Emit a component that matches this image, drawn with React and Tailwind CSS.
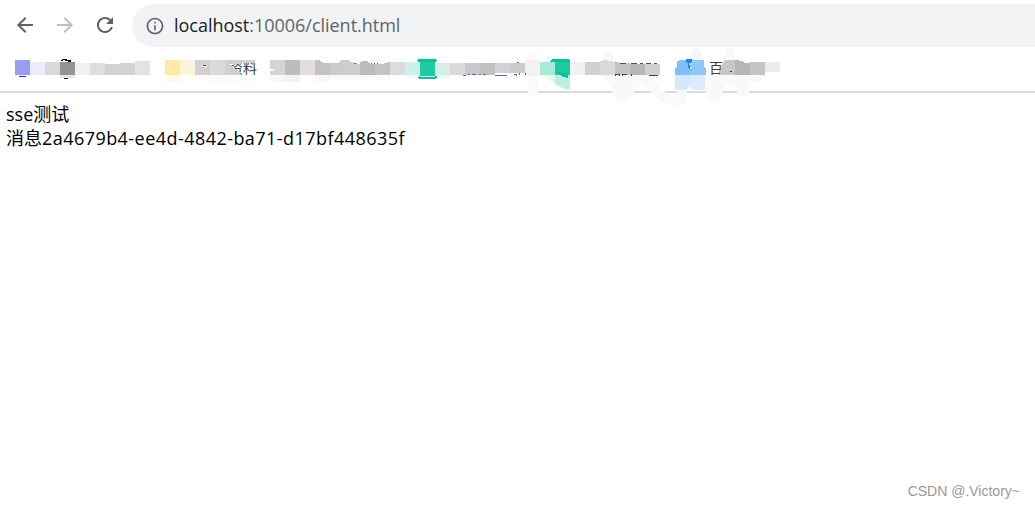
import { MdArrowBack, MdArrowForward, MdRefresh, MdInfoOutline } from 'react-icons/md';

// x, top, width, height, colour
const blocks = [
  [15, 60, 15, 15, '#9a9ef0'],
  [30, 62, 15, 13, '#eaecfb'],
  [45, 62, 15, 13, '#d9d9d9'],
  [60, 62, 15, 13, '#939393'],
  [75, 63, 15, 12, '#f0f0ee'],
  [90, 63, 15, 12, '#dedede'],
  [105, 64, 15, 11, '#d2d2d2'],
  [120, 63, 15, 12, '#d2d3d5'],
  [135, 61, 15, 14, '#e3e3e3'],
  [165, 60, 15, 15, '#fdeaa5'],
  [180, 60, 15, 15, '#fdf4dc'],
  [195, 60, 15, 15, '#d1d1d2'],
  [210, 60, 15, 15, '#dcdbda'],
  [270, 60, 15, 15, '#d2d4d6'],
  [285, 60, 15, 15, '#bbbdc0'],
  [300, 60, 15, 15, '#e2dedd'],
  [390, 62, 15, 13, '#dadce1'],
  [405, 62, 15, 13, '#caf2e8'],
  [435, 63, 15, 12, '#d5eee7'],
  [450, 63, 15, 12, '#dadad8'],
  [465, 63, 15, 12, '#c5c8cc'],
  [480, 63, 15, 12, '#c1c2bf'],
  [495, 63, 15, 10, '#d0d3d7'],
  [510, 63, 15, 10, '#cccccd'],
  [540, 62, 15, 13, '#a8e9da'],
  [570, 62, 15, 13, '#f1f1f1'],
  [585, 62, 15, 13, '#d0d0d1'],
  [645, 64, 15, 11, '#d0d0d0'],
  [765, 62, 15, 10, '#ebebee'],
];

const shades = [
  [15, 75, 15, 1, '#f3f3fd'],
  [60, 75, 15, 3, '#e5e5e5'],
  [165, 75, 15, 7, '#fffaea'],
  [180, 75, 15, 7, '#fffdf7'],
  [270, 75, 15, 7, '#f8f8f8'],
  [285, 75, 15, 7, '#f1f3f2'],
  [315, 75, 15, 7, '#f8f8f8'],
  [330, 75, 60, 5, '#fafafa'],
  [405, 75, 45, 3, '#eefaf7'],
];

function Rects({ items }) {
  return items.map(([x, y, w, h, fill]) => <rect key={x} x={x} y={y} width={w} height={h} fill={fill} />);
}

function Smudges() {
  return (
    <svg className="absolute left-0 top-0" width="800" height="59" viewBox="0 47 800 59" shapeRendering="crispEdges">
      {/* faint brush strokes */}
      <path d="M195 75H255V90L232 84L195 80Z" fill="#fbfbfb" />
      <rect x="528" y="50" width="10" height="46" rx="5" fill="#fafafa" />
      <rect x="525" y="60" width="15" height="16" fill="#f2f2f2" />
      <path d="M602 61L604 54Q608 51 612 54L614 61Z" fill="#f8f8f8" />
      <path d="M600 75H660V79H654L661 90L674 97L678 90H687V105H670L661 101L641 83L634 92L630 99Q622 106 615 98L610 85L604 79Z" fill="#f9f9f9" />
      <path d="M705 75H765V79L751 83L749 94Q744 101 738 94L734 84H727L719 99Q713 107 708 99L705 90Z" fill="#f9f9f9" />
      <path d="M691 60L693 50Q697 45 701 50L703 60Z" fill="#f2f7fb" />
      <path d="M724 60L726 50Q730 45 734 50L736 60Z" fill="#f8f8f8" />
      <Rects items={shades} />
      <Rects items={blocks} />
      {/* uneven upper edges */}
      <path d="M315 60H319L324 63H330V75H315Z" fill="#c2c3c5" />
      <path d="M330 63H338L341 60H345V75H330Z" fill="#caccce" />
      <path d="M345 60H348L351 62L360 64V75H345Z" fill="#cfccca" />
      <path d="M360 62L364 61H368L370 64H375V75H360Z" fill="#b9bbbc" />
      <path d="M375 64H383L388 62H390V75H375Z" fill="#c5c2c0" />
      <path d="M225 60H255V63H244L238 64L229 64L234 68L240 72L241 75H225Z" fill="#cfcfd0" />
      <path d="M202 65h4v2h-4zM270 69h5v1h-2v1h-3z" fill="#fff" />
      <path d="M203 65h3v1h-3z" fill="#444" />
      <path d="M19 76h7v1h-7z" fill="#3030ee" />
      <path d="M60 61L62 59H67V60H71V62H68V61H65V60H63V61Z" fill="#111" />
      <rect x="64" y="78" width="4" height="1" fill="#111" />
      {/* green favicons */}
      <path d="M417 60L419 59H436L437 61L435 62H418Z" fill="#00c696" />
      <rect x="420" y="62" width="15" height="14" fill="#1fc9a3" />
      <path d="M417 77L420 76V77H435V76H437V78L435 79H419Z" fill="#00c696" />
      <path d="M550 61L552 59H569L570 61V63H555V62H550Z" fill="#00c493" />
      <path d="M541 75H555V84Z" fill="#e7f9f3" />
      <path d="M555 75H570V89H565L555 84Z" fill="#bceee1" />
      <rect x="555" y="62" width="15" height="13" fill="#1fc9a3" />
      <path d="M558 72L568 74V77L567 79L565 77L561 76Z" fill="#00c493" />
      {/* grey run before the blue favicon */}
      <path d="M600 61L606 60L615 62V75H600Z" fill="#d9d9d9" />
      <path d="M615 61L620 63H630V75H615Z" fill="#c3c3c3" />
      <path d="M630 64H645V75H630Z" fill="#b6b6b6" />
      <path d="M675 75H690V86L687 90H675Z" fill="#d5e9fd" />
      <path d="M690 75H705V90H692L690 86Z" fill="#d9ebfd" />
      <path d="M677 61L680 60H690V75H675V68L677 66Z" fill="#7fbffb" />
      <path d="M690 60H703L704 61V66L706 69V75H690Z" fill="#90c7fb" />
      <path d="M686 59H692V62L690 63V66L692 70L688 68V64L686 62Z" fill="#1687f5" />
      <path d="M689 63h2v2h-2zM690 67h2v2h-2z" fill="#c9e3fd" />
      <path d="M723 63L725 60H735V75H720V72Z" fill="#c7c7c7" />
      <path d="M735 60L742 61L745 63H750V75H735Z" fill="#b7b5b7" />
      <path d="M750 62H765V75H750Z" fill="#c1c6c4" />
      <path d="M730 71h2v1h-2z" fill="#333" />
      {/* leftovers of covered labels */}
      <path d="M354 63h2v1h-2zM371 63h1v1h-1zM374 63h1v1h-1zM377 63h1v1h-1zM517 62h2v1h-2z" fill="#665" />
      <path d="M620 63h6v1h-6zM631 63h6v1h-6zM640 63h3v1h-3zM646 63h5v1h-5zM654 63h3v1h-3z" fill="#555" />
      <path d="M615 74h5v1h-5zM615 75h1v1h-1zM619 75h1v1h-1zM622 74h5v1h-5zM622 75h1v1h-1zM631 74h1v2h-1zM649 75h9v1h-9z" fill="#444" />
      <path d="M463 75h3v1h-3zM468 74h2v1h-2zM472 74h4v1h-4zM479 74h2v1h-2zM483 74h3v1h-3zM495 75h12v1h-12zM514 74h3v1h-3zM516 75h1v1h-1zM519 73h1v2h-1zM525 73h1v2h-1z" fill="#667" />
    </svg>
  );
}

function AddressBar() {
  return (
    <div className="flex h-[47px] items-center pt-1 text-[#5f6368]">
      <div className="flex w-[132px] items-center gap-4 pb-px pl-[12.5px]">
        <MdArrowBack size={24} />
        <MdArrowForward size={24} className="text-[#bdbfc1]" />
        <MdRefresh size={24} />
      </div>
      <div className="flex h-[43px] flex-1 items-center rounded-l-full bg-[#f1f3f4] pl-[12.5px]">
        <MdInfoOutline size={20} />
        <p className="ml-[9.5px] whitespace-nowrap pb-px text-[18px] leading-6 tracking-[-0.02px]">
          <span className="text-[#202124]">localhost</span>:10006/client.html
        </p>
      </div>
    </div>
  );
}

function BookmarksBar() {
  return (
    <div className="relative h-[46px] border-b-2 border-[#dadcdb] text-sm leading-5 text-[#3c4043]">
      <span className="absolute left-[229px] top-[11px]">资料</span>
      <span className="absolute left-[709px] top-[11px]">百</span>
      <Smudges />
    </div>
  );
}

export default function App() {
  return (
    <div className="flex h-[508px] flex-col overflow-hidden bg-white font-['Open_Sans','Noto_Sans_CJK_SC',sans-serif]">
      <AddressBar />
      <BookmarksBar />
      <main className="flex-1 px-[6px] pt-[9px] text-[18px] leading-6 text-black">
        <p>sse测试</p>
        <p>
          消息<span className="tracking-[0.45px]">2a4679b4-ee4d-4842-ba71-d17bf448635f</span>
        </p>
      </main>
      <footer className="flex justify-end pr-[15px] pb-[7px] font-['Liberation_Sans',sans-serif] text-sm leading-5 text-[#999]">
        CSDN @.Victory~
      </footer>
    </div>
  );
}
